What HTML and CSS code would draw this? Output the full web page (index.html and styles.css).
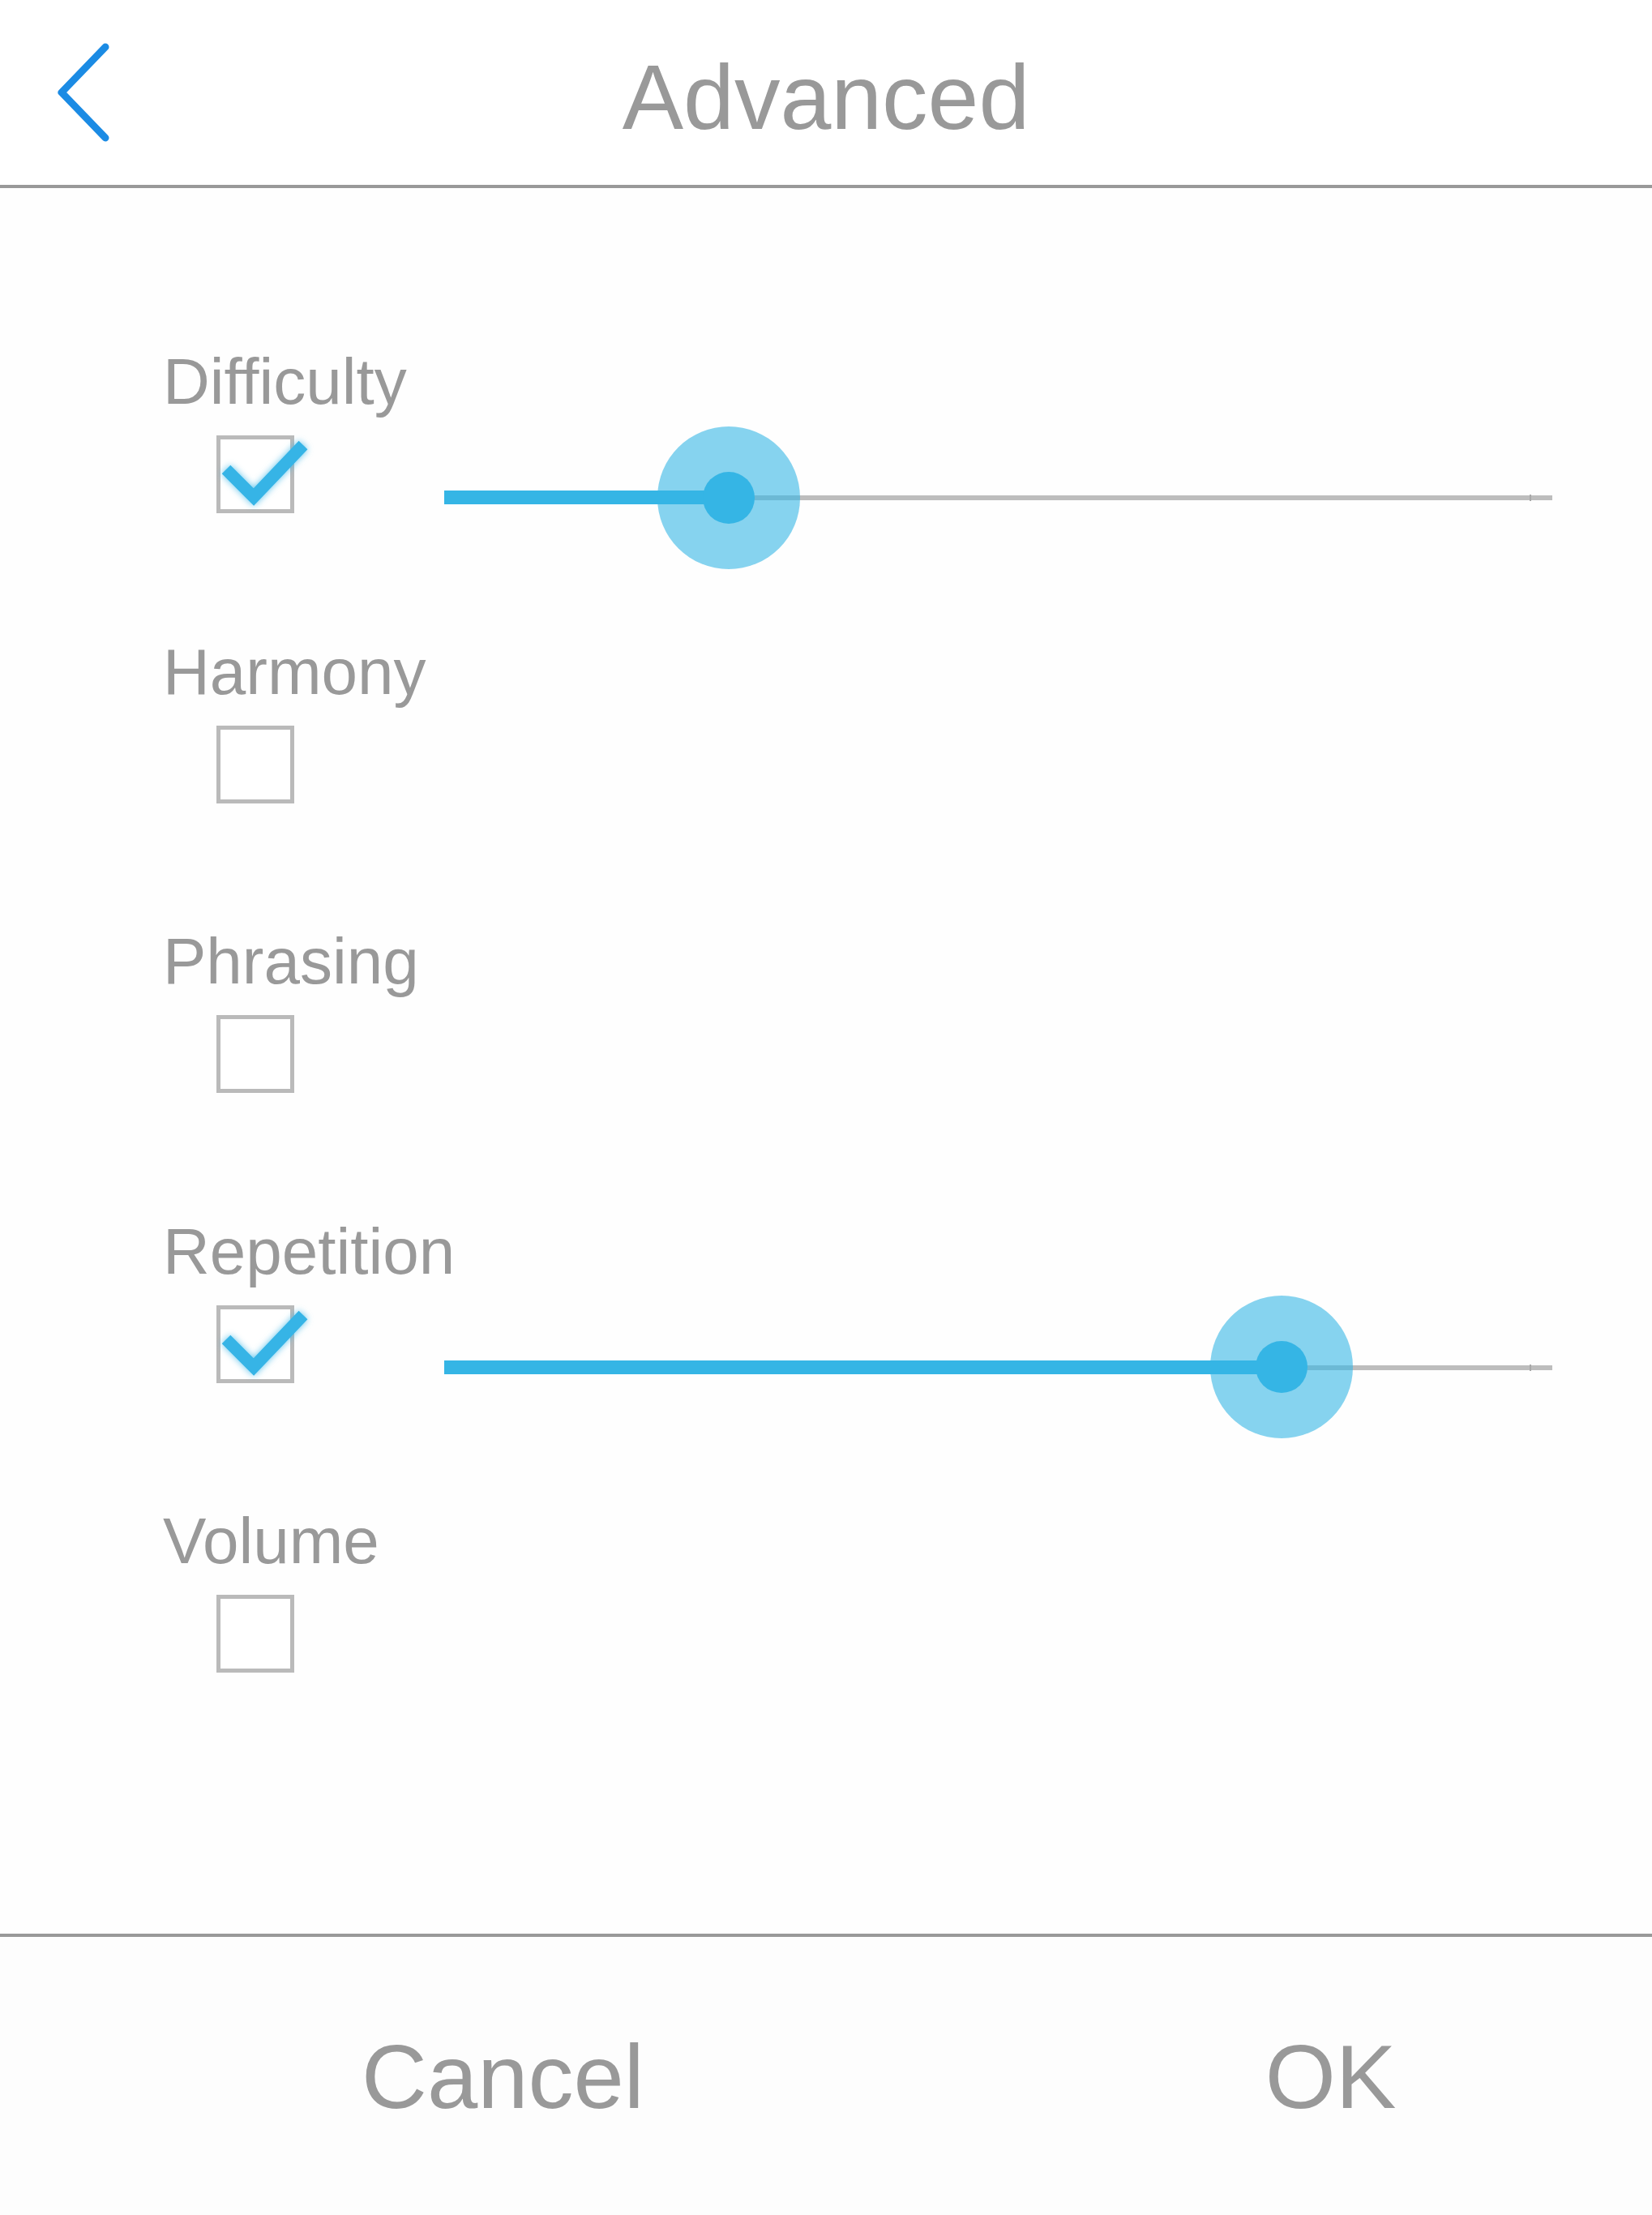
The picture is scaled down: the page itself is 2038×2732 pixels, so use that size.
FILE: index.html
```html
<!DOCTYPE html>
<html lang="en">
<head>
<meta charset="utf-8">
<title>Advanced</title>
<link rel="stylesheet" href="styles.css">
</head>
<body>
<div class="page">
  <header class="header">
    <button class="back" aria-label="Back">
      <svg class="back-icon" width="228" height="228" viewBox="0 0 228 228">
        <polyline points="130,58 76,114 130,170" fill="none" stroke="#1b8be4" stroke-width="9" stroke-linecap="round" stroke-linejoin="round"/>
      </svg>
    </button>
    <h1 class="title">Advanced</h1>
    <div class="spacer"></div>
  </header>

  <main class="content">
    <section class="row">
      <div class="label">Difficulty</div>
      <div class="controls">
        <div class="checkbox checked">
          <svg class="check" width="130" height="100" viewBox="0 0 130 100"><polyline points="12,42 46,76 107,12" fill="none" stroke="#36b4e6" stroke-width="15"/></svg>
        </div>
        <div class="slider">
          <div class="track"></div>
          <div class="tick"></div>
          <div class="fill" style="width:25.7%"></div>
          <div class="thumb" style="left:25.7%"><div class="thumb-core"></div></div>
        </div>
      </div>
    </section>

    <section class="row">
      <div class="label">Harmony</div>
      <div class="controls">
        <div class="checkbox"></div>
      </div>
    </section>

    <section class="row">
      <div class="label">Phrasing</div>
      <div class="controls">
        <div class="checkbox"></div>
      </div>
    </section>

    <section class="row">
      <div class="label">Repetition</div>
      <div class="controls">
        <div class="checkbox checked">
          <svg class="check" width="130" height="100" viewBox="0 0 130 100"><polyline points="12,42 46,76 107,12" fill="none" stroke="#36b4e6" stroke-width="15"/></svg>
        </div>
        <div class="slider">
          <div class="track"></div>
          <div class="tick"></div>
          <div class="fill" style="width:75.6%"></div>
          <div class="thumb" style="left:75.6%"><div class="thumb-core"></div></div>
        </div>
      </div>
    </section>

    <section class="row">
      <div class="label">Volume</div>
      <div class="controls">
        <div class="checkbox"></div>
      </div>
    </section>
  </main>

  <footer class="footer">
    <button class="btn btn-cancel">Cancel</button>
    <button class="btn btn-ok">OK</button>
  </footer>
</div>
</body>
</html>
```

FILE: styles.css
```css
* { box-sizing: border-box; }

html, body {
  margin: 0;
  padding: 0;
  background: #fefefe;
}

body {
  font-family: "Liberation Sans", Arial, Helvetica, sans-serif;
  color: #999999;
}

.page {
  width: 2038px;
  height: 2732px;
  display: flex;
  flex-direction: column;
}

.header {
  height: 232px;
  flex: none;
  display: grid;
  grid-template-columns: 228px 1fr 228px;
  background: #ffffff;
  border-bottom: 4px solid #999999;
}

.back {
  width: 228px;
  height: 228px;
  padding: 0;
  margin: 0;
  border: 0;
  background: transparent;
  display: block;
}

.back-icon { display: block; }

.title {
  margin: 0;
  padding-top: 12px;
  font-size: 113px;
  line-height: 216px;
  font-weight: normal;
  text-align: center;
  color: #999999;
}

.content {
  flex: 1;
  padding: 199px 0 0 201px;
  display: flex;
  flex-direction: column;
  gap: 155.5px;
}

.row {
  display: flex;
  flex-direction: column;
  gap: 26px;
}

.label {
  font-size: 80px;
  line-height: 80px;
  color: #999999;
}

.controls {
  display: flex;
  align-items: flex-start;
  padding-left: 66px;
  height: 96px;
}

.checkbox {
  position: relative;
  width: 96px;
  height: 96px;
  flex: none;
  border: 5px solid #bababa;
  background: #ffffff;
}

.check {
  position: absolute;
  left: -5px;
  top: -5px;
  overflow: visible;
  filter: drop-shadow(0 0 4px rgba(54, 180, 230, 0.8));
}

.slider {
  position: relative;
  margin-left: 185px;
  margin-top: 68px;
  width: 1367px;
  height: 17px;
  flex: none;
}

.track {
  position: absolute;
  left: 0;
  right: 0;
  top: 6px;
  height: 6px;
  background: #bdbdbd;
}

.tick {
  position: absolute;
  left: 1339px;
  top: 5px;
  width: 2px;
  height: 8px;
  background: #a8a8a8;
}

.fill {
  position: absolute;
  left: 0;
  top: 0;
  height: 17px;
  background: #35b5e5;
}

.thumb {
  position: absolute;
  top: 8.5px;
  width: 176px;
  height: 176px;
  margin-left: -88px;
  margin-top: -88px;
  border-radius: 50%;
  background: rgba(53, 181, 229, 0.6);
  display: flex;
  align-items: center;
  justify-content: center;
}

.thumb-core {
  width: 64px;
  height: 64px;
  border-radius: 50%;
  background: #35b5e5;
}

.footer {
  height: 347px;
  flex: none;
  border-top: 4px solid #999999;
  background: #fdfdfd;
  display: flex;
  align-items: stretch;
  padding-top: 3px;
}

.btn {
  margin: 0;
  padding: 0;
  border: 0;
  background: transparent;
  font-family: "Liberation Sans", Arial, Helvetica, sans-serif;
  font-size: 112px;
  line-height: 340px;
  color: #999999;
}

.btn-cancel { margin-left: 446px; }
.btn-ok { margin-left: 766px; }
```
